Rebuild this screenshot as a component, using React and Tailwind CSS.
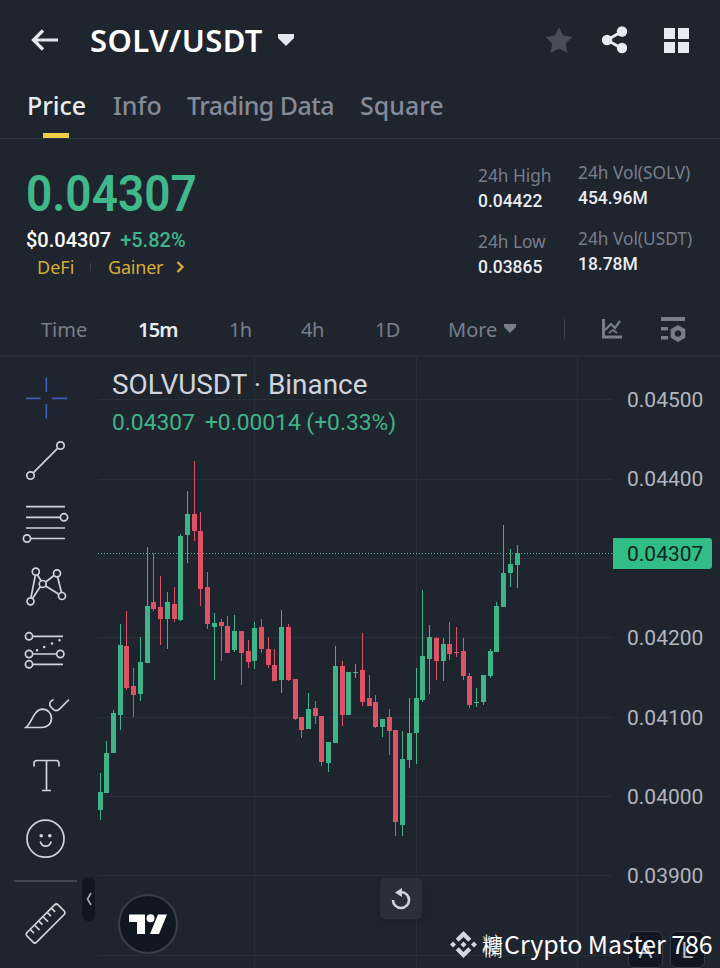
const UP = '#3fb489';
const DOWN = '#df5266';

// [center x, direction, high, body top, body bottom, low]
const candles = [
  [100.5, 1, 773, 792, 810, 820], [106.5, 1, 741, 753, 793, 793], [113.5, 1, 710, 713, 753, 753],
  [120.5, 1, 624, 645, 715, 730], [126.5, 0, 611, 646, 688, 690], [133.5, 0, 668, 686, 695, 717],
  [140.5, 1, 637, 662, 694, 701], [147.5, 1, 547, 606, 663, 663], [153.5, 0, 553, 602, 609, 611],
  [160.5, 0, 576, 607, 619, 645], [167.5, 1, 592, 602, 619, 649], [174.5, 0, 587, 604, 619, 622],
  [180.5, 1, 534, 536, 620, 621], [187.5, 1, 491, 514, 535, 563], [194.5, 0, 461, 514, 531, 541],
  [200.5, 0, 512, 531, 589, 606], [207.5, 0, 572, 587, 624, 629], [214.5, 1, 613, 623, 627, 680],
  [221.5, 0, 619, 622, 626, 661], [227.5, 0, 616, 626, 653, 653], [234.5, 1, 615, 631, 650, 652],
  [241.5, 0, 631, 631, 653, 685], [248.5, 0, 640, 651, 662, 668], [254.5, 1, 622, 628, 661, 669],
  [261.5, 0, 619, 627, 649, 653], [268.5, 0, 637, 649, 665, 668], [274.5, 0, 649, 665, 681, 681],
  [281.5, 1, 610, 627, 680, 693], [288.5, 0, 624, 627, 680, 681], [295.5, 0, 679, 679, 719, 720],
  [301.5, 0, 717, 717, 730, 738], [308.5, 1, 693, 709, 729, 729], [315.5, 0, 701, 708, 716, 724],
  [321.5, 0, 716, 716, 762, 766], [328.5, 1, 742, 742, 763, 772], [335.5, 1, 646, 666, 743, 743],
  [342.5, 0, 661, 666, 715, 726], [348.5, 1, 672, 672, 715, 715], [355.5, 1, 664, 672, 673, 678],
  [362.5, 0, 633, 670, 702, 706], [369.5, 0, 675, 698, 706, 706], [375.5, 0, 695, 702, 727, 728],
  [382.5, 1, 719, 719, 727, 737], [389.5, 0, 709, 717, 731, 755], [395.5, 0, 730, 730, 822, 836],
  [402.5, 1, 731, 759, 825, 836], [409.5, 1, 698, 733, 760, 768], [416.5, 1, 668, 698, 733, 764],
  [422.5, 1, 590, 656, 700, 702], [429.5, 1, 625, 637, 659, 694], [436.5, 0, 637, 638, 661, 680],
  [443.5, 1, 638, 644, 661, 681], [449.5, 0, 622, 644, 654, 660], [456.5, 0, 627, 652, 653, 657],
  [463.5, 0, 638, 651, 676, 680], [469.5, 0, 673, 676, 705, 708], [476.5, 1, 688, 702, 703, 707],
  [483.5, 1, 675, 675, 702, 705], [490.5, 1, 649, 651, 676, 678], [496.5, 1, 602, 606, 652, 652],
  [503.5, 1, 525, 573, 607, 607], [510.5, 1, 549, 564, 573, 587], [517.5, 1, 545, 553, 565, 588],
];

const gridRows = [399, 479, 558, 637, 717, 796, 875, 955];
const gridCols = [254, 416, 577];

const plex = "font-['Noto_Sans',sans-serif]";

function Chart() {
  return (
    <svg width="515" height="611" viewBox="98 357 515 611" className="block shrink-0" shapeRendering="crispEdges">
      {gridRows.map((y) => (
        <rect key={y} x="98" y={y} width="515" height="1" fill="#292f39" />
      ))}
      {gridCols.map((x) => (
        <rect key={x} x={x} y="357" width="1" height="611" fill="#292f39" />
      ))}
      <line x1="98" x2="613" y1="553.5" y2="553.5" stroke="#4fb596" strokeDasharray="1 2" />
      {candles.map(([x, up, high, top, bottom, low]) => (
        <g key={x} fill={up ? UP : DOWN}>
          <rect x={x - 0.5} y={high} width="1" height={low - high} />
          <rect x={x - 2.5} y={top} width="5" height={bottom - top} />
        </g>
      ))}
    </svg>
  );
}

function Tools() {
  return (
    <svg width="98" height="611" viewBox="0 357 98 611" className="block" fill="none" stroke="#d0d3dc" strokeWidth="1.7">
      <path d="M46.3 377.500v14.500M46.3 404v14.500M26 398.300h14.500M52 398.300h15" stroke="#3f5fb5" />
      <g>
        <circle cx="60.500" cy="445.500" r="3.700" />
        <circle cx="30.500" cy="475.500" r="3.700" />
        <path d="M57.800 448.200 33.200 472.800" />
      </g>
      <g>
        <path d="M26 506.700h39M26 517.300h34M26 528h39M31 538.500h34" />
        <circle cx="64" cy="517.300" r="3.600" />
        <circle cx="27" cy="538.500" r="3.600" />
      </g>
      <g>
        <path d="M35.300 575.500 31 597.500M37.500 575 41 580.700M45.700 582 54 575.500M46 586.200 58.500 594M57.500 576.700 61.500 592.500M40.200 586.800 32.800 598" />
        <circle cx="35.800" cy="571.700" r="3.500" />
        <circle cx="57" cy="573.300" r="3.500" />
        <circle cx="42.700" cy="584" r="3.500" />
        <circle cx="62" cy="596" r="3.500" />
        <circle cx="30.500" cy="601.300" r="3.500" />
      </g>
      <g>
        <path d="M32.500 636.300H63M32.500 654H56.500M32.500 664.300H63" />
        <circle cx="29" cy="636.300" r="3.600" />
        <circle cx="29" cy="654" r="3.600" />
        <circle cx="60.300" cy="654" r="3.600" />
        <circle cx="29" cy="664.300" r="3.600" />
        <path d="M37 650.300h.01M44.200 647h.01M52 643.500h.01M59.500 640.300h.01" strokeWidth="2.600" strokeLinecap="round" />
      </g>
      <path d="M26 727.500C32 723 33.500 709.500 42.500 709.200C48 709.200 51.500 713.500 51.500 718.500C51.500 724 47 727.500 41 727.500ZM53.500 699.500C49 701.500 48.800 705 51.300 707.500L53 709.200C55.300 711.500 57.700 711 60 708.700L69 699.500" />
      <path d="M34 766.500V763.500Q34 760.500 37 760.500H56Q59 760.500 59 763.500V766.500M46.500 760.500V790.300M42 790.500H51" />
      <circle cx="45.500" cy="838.700" r="18.500" />
      <path d="M40.500 842C42 847.500 49.500 847.500 51 842" strokeLinecap="round" />
      <path d="M41.200 835.800h.01M49.800 835.800h.01" strokeWidth="3.600" strokeLinecap="round" />
      <path d="M14 881H77" stroke="#434854" strokeWidth="2" />
      <g transform="translate(45.600 923.500) rotate(-45)">
        <rect x="-22" y="-6.800" width="44" height="13.600" rx="2.500" />
        <path d="M-15 -6.500v5M-9 -6.500v7M-3 -6.500v5M3 -6.500v7M9 -6.500v5M15 -6.500v5" />
      </g>
    </svg>
  );
}

function Stat({ label, value }) {
  return (
    <div className="h-[66px] whitespace-nowrap">
      <div className="h-[26px] origin-left scale-x-[0.96] text-[18px] leading-[26px] text-[#777e8a]">{label}</div>
      <div className="h-[26px] origin-left scale-x-[0.97] font-[Roboto] text-[18px] leading-[26px] font-medium text-[#eaecef]">{value}</div>
    </div>
  );
}

function Axis() {
  const labels = ['0.04500', '0.04400', '', '0.04200', '0.04100', '0.04000', '0.03900'];
  return (
    <div className="relative w-[107px] shrink-0 pt-[3px] font-[Roboto] text-[21px] text-[#b2b5be]">
      {labels.map((label, i) => (
        <div key={i} className="h-[79.400px] pl-[14px] leading-[80px]">{label}</div>
      ))}
      <div className="absolute top-[181px] left-0 h-[31px] w-[99px] rounded-r-[3px] bg-[#32bd86] pl-[14px] leading-[32px] text-[#10251f]">0.04307</div>
    </div>
  );
}

function Watermark() {
  return (
    <div className="absolute top-[571px] left-[450px] flex h-8 items-center whitespace-nowrap text-white">
      <svg width="27" height="27" viewBox="0 0 27 27" fill="#d3d7e2">
        <path d="m13.500 0 7.800 7.800-3 3-4.800-4.800-4.800 4.800-3-3ZM13.500 27l-7.800-7.800 3-3 4.800 4.800 4.800-4.800 3 3ZM0 13.500l3-3 3 3-3 3ZM21 13.500l3-3 3 3-3 3ZM10.500 13.500l3-3 3 3-3 3Z" />
      </svg>
      <span className="relative ml-[5px] h-8 w-[22px] font-['Noto_Sans_CJK_SC',sans-serif] text-[21px] leading-8 font-light">
        <span className="absolute top-[-1px] left-0">糖</span>
        <span className="absolute top-[2px] left-0">欄</span>
      </span>
      <span className="-mt-[2px] font-['Noto_Sans_CJK_SC',sans-serif] text-[24.900px] leading-8">Crypto Master 786</span>
    </div>
  );
}

export default function App() {
  return (
    <div className={`h-[968px] w-[720px] overflow-hidden bg-[#1f252f] text-white ${plex}`}>
      <header className="flex h-[80px] items-center pl-[31px]">
        <svg width="28" height="22" viewBox="0 0 28 22" fill="none" stroke="#e3e6ee" strokeWidth="3.200" className="mr-[31px]">
          <path d="M27 11H3M12 1.500 2.500 11l9.500 9.500" />
        </svg>
        <h1 className="w-[187px] text-[31px] leading-10 font-semibold tracking-[0.4px] whitespace-nowrap">SOLV/USDT</h1>
        <svg width="18" height="13" viewBox="0 0 18 13" fill="#e5e7f0"><path d="M1 0h16v4L9 12 1 4Z" /></svg>
        <svg width="28" height="27" viewBox="0 0 28 27" fill="#474d59" className="ml-[250px]">
          <path d="m14 0 4.100 8.600 9.400 1.300-6.800 6.600 1.700 9.500-8.400-4.500L5.600 26l1.700-9.500L.5 9.900l9.400-1.300Z" />
        </svg>
        <svg width="28" height="28" viewBox="0 0 28 28" fill="#e8eaf2" className="ml-[28px]">
          <path d="M6 14 21 5.500M6 14l15 8.500" stroke="#e8eaf2" strokeWidth="3" />
          <circle cx="6" cy="14" r="5.200" /><circle cx="21" cy="5.500" r="5.200" /><circle cx="21" cy="22" r="5.200" />
        </svg>
        <svg width="25" height="25" viewBox="0 0 25 25" fill="#e8eaf2" className="ml-[35px]">
          <path d="M0 0h11v11H0zM14 0h11v11H14zM0 14h11v11H0zM14 14h11v11H14z" />
        </svg>
      </header>
      <nav className="flex h-[59px] border-b border-[#2d333d] pl-[27px] text-[25px] leading-[51px] font-medium whitespace-nowrap text-[#848a97]">
        <div className="flex w-[86px] flex-col text-[#eaecef]">
          Price
          <i className="mt-[2px] ml-4 block h-[5px] w-[26px] bg-[#f0ce4c]" />
        </div>
        <div className="w-[74px]">Info</div>
        <div className="w-[173px] tracking-[-0.55px]">Trading Data</div>
        <div>Square</div>
      </nav>
      <section className="flex h-[163px]">
        <div className="w-[478px] pt-[24px] pl-[26px]">
          <div className="h-[62px] origin-left scale-x-[0.92] font-[Roboto] text-[50px] leading-[62px] font-semibold text-[#3fb98a]">0.04307</div>
          <div className="flex h-[30px] gap-[9px] font-[Roboto] text-[20px] leading-[30px] font-medium">
            <span>$0.04307</span>
            <span className="text-[#3fb489]">+5.82%</span>
          </div>
          <div className="flex h-[24px] items-center pl-[11px] text-[18px] leading-6 text-[#d6ab37]">
            <span className="w-[53px]">DeFi</span>
            <i className="h-[8px] w-px bg-[#3c434e]" />
            <span className="ml-[17px] w-[68px] tracking-[-0.2px]">Gainer</span>
            <svg width="9" height="12" viewBox="0 0 9 12" fill="none" stroke="#d6ab37" strokeWidth="2.300"><path d="m1.500 1 5 5-5 5" /></svg>
          </div>
        </div>
        <div className="w-[100px] pt-[23px]">
          <Stat label="24h High" value="0.04422" />
          <Stat label="24h Low" value="0.03865" />
        </div>
        <div className="pt-[20px]">
          <Stat label="24h Vol(SOLV)" value="454.96M" />
          <Stat label="24h Vol(USDT)" value="18.78M" />
        </div>
      </section>
      <nav className="flex h-[55px] items-center border-b-2 border-[#262c36] pl-[41px] text-[20px] whitespace-nowrap text-[#777e8a]">
        <span className="mt-[2px] w-[97px]">Time</span>
        <span className="mt-[2px] w-[91px] font-semibold tracking-[-0.8px] text-[#eaecef]">15m</span>
        <span className="mt-[2px] w-[72px] tracking-[-0.8px]">1h</span>
        <span className="mt-[2px] w-[74px] tracking-[-0.5px]">4h</span>
        <span className="mt-[2px] w-[73px] tracking-[-0.8px]">1D</span>
        <span className="mt-[2px] w-[56px]">More</span>
        <svg width="12" height="9" viewBox="0 0 12 9" fill="#777e8a"><path d="M0 0h12v3L6 9 0 3Z" /></svg>
        <i className="ml-[48px] h-[20px] w-px bg-[#3a404b]" />
        <svg width="20" height="20" viewBox="0 0 20 20" fill="none" stroke="#777e8a" className="ml-[37px]">
          <path d="M1.500 0v18H20" strokeWidth="3" /><path d="m3 11 6-6 4 4 5-7" strokeWidth="2.200" /><path d="M7 14l4-3 4 3" strokeWidth="1.800" />
        </svg>
        <svg width="26" height="26" viewBox="0 0 26 26" fill="#777e8a" className="ml-[38px]">
          <path d="M1 1h24v4H1zM1 11h7v3.500H1zM1 20h7v3.500H1z" />
          <path fillRule="evenodd" d="M18 9l7.300 4.200v8.500L18 26l-7.300-4.300v-8.500ZM18 14.200a3.300 3.300 0 1 0 .01 0Z" />
        </svg>
      </nav>
      <main className="relative flex h-[611px]">
        <Tools />
        <Chart />
        <Axis />
        <div className="absolute top-[9px] left-[112px] font-[Roboto] whitespace-nowrap">
          <div className="text-[27.900px] leading-[37px] text-[#d1d4dc]">SOLVUSDT · Binance</div>
          <div className="flex gap-[10px] text-[22.800px] leading-[40px] text-[#3fb489]"><span>0.04307</span><span>+0.00014 (+0.33%)</span></div>
        </div>
        <div className="absolute top-[520px] left-[82px] flex h-[44px] w-[13px] items-center justify-center rounded-[6px] bg-[#111722]">
          <svg width="6" height="14" viewBox="0 0 6 14" fill="none" stroke="#b2b5be" strokeWidth="1.500"><path d="M5 1 1.500 7 5 13" /></svg>
        </div>
        <div className="absolute top-[537px] left-[118px] flex h-[60px] w-[60px] items-center justify-center rounded-full border-2 border-[#3a3e49] bg-[#111722]">
          <svg width="38" height="21" viewBox="0 0 38 21" fill="#fff"><path d="M0 .5h16V20H8V8H0zM29 .5h9L30 20h-9z" /><circle cx="21.500" cy="4.300" r="4" /></svg>
        </div>
        <div className="absolute top-[521px] left-[380px] flex h-[41px] w-[42px] items-center justify-center rounded-[5px] bg-[#2a303b] shadow-md">
          <svg width="20" height="22" viewBox="0 0 20 22"><path d="M2 12a8 8 0 1 0 8-8" fill="none" stroke="#d1d4dc" strokeWidth="2.600" /><path d="M4 4.500 11 0v9Z" fill="#d1d4dc" /></svg>
        </div>
        <div className="absolute top-[574px] left-[628px] flex gap-[7px] text-center font-[Roboto] text-[22px] leading-[37px] text-[#b9bcc5]">
          <span className="h-[37px] w-[35px] rounded-[6px] border border-[#343a46] bg-[#111722]">A</span>
          <span className="h-[37px] w-[35px] rounded-[6px] border border-[#343a46] bg-[#111722]">L</span>
        </div>
        <Watermark />
      </main>
    </div>
  );
}
